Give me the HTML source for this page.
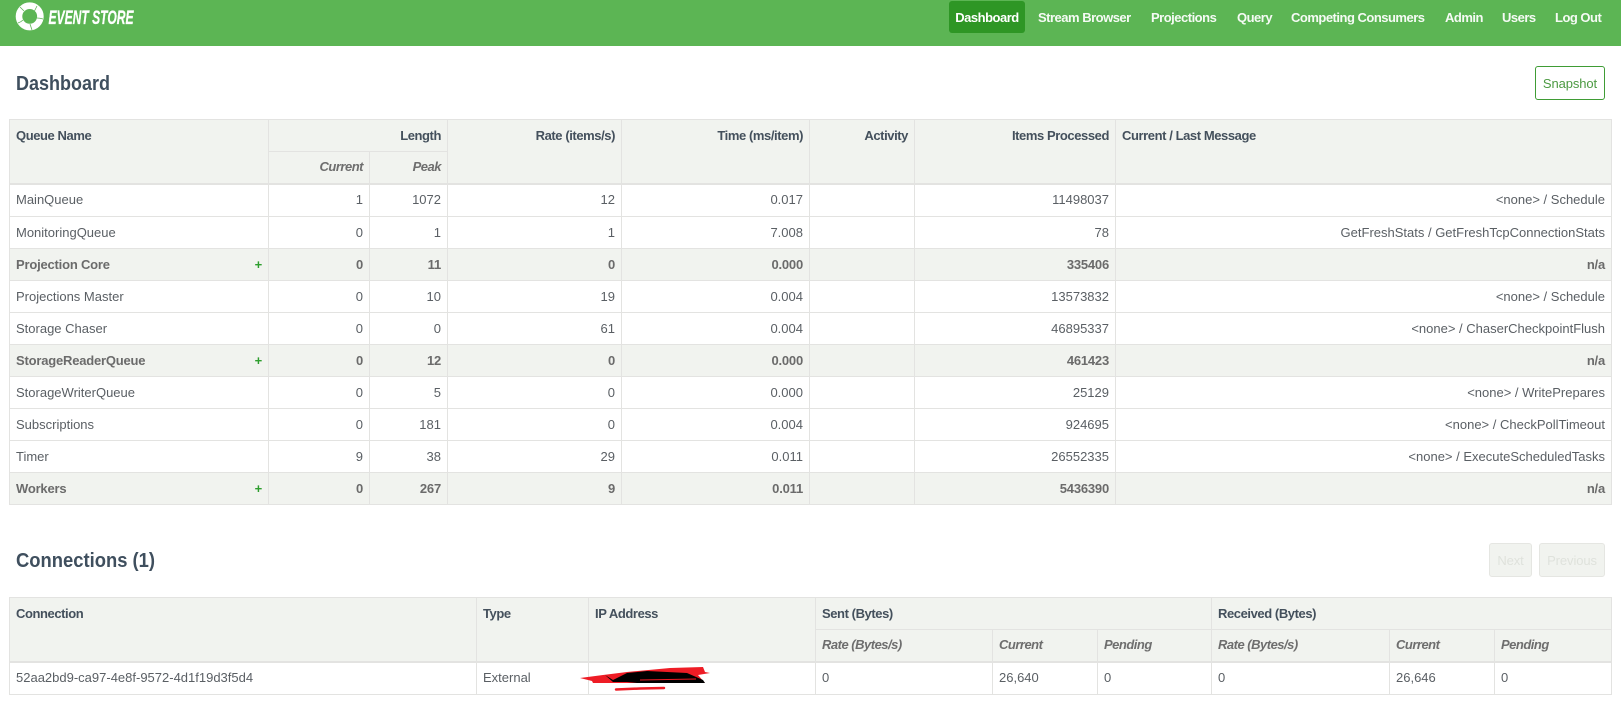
<!DOCTYPE html>
<html lang="en">
<head>
<meta charset="utf-8">
<title>Event Store Dashboard</title>
<style>
html,body{margin:0;padding:0;background:#fff;width:1621px;height:711px;overflow:hidden}
body{font-family:"Liberation Sans",Arial,sans-serif;font-size:13px;color:#5a5f64;position:relative}
.nav{position:absolute;left:0;top:0;width:1621px;height:46px;background:#5cb554}
.logo{position:absolute;left:14px;top:0}
.nav a{position:absolute;top:1px;height:32px;line-height:34px;color:#fff;font-weight:bold;font-size:13px;letter-spacing:-.5px;white-space:nowrap;text-decoration:none;opacity:.94}
.nav a.on{left:949px;width:76px;background:#2e9625;border-radius:3px;text-align:center;opacity:1}
h1{position:absolute;margin:0;left:16px;font-size:20px;line-height:24px;font-weight:bold;color:#3f4f5e;transform-origin:0 50%;white-space:nowrap}
.btn{position:absolute;box-sizing:border-box;text-align:center;border-radius:3px;font-size:13px;letter-spacing:-.1px}
.snap{left:1535px;top:66px;width:70px;height:34px;line-height:33px;border:1px solid #3f9c35;color:#4c9a42}
.dis{top:543px;height:34px;line-height:33px;background:#f1f3ef;border:1px solid #e5e6e2;color:#dfe2dc}
table{position:absolute;left:9px;border-collapse:collapse;table-layout:fixed;background:#fff}
th,td{border:1px solid #e3e3e1;padding:0 6px;height:32px;line-height:16px;font-size:13px;white-space:nowrap;overflow:hidden;box-sizing:border-box}
th{background:#f1f3ef;color:#44505c;font-weight:bold;letter-spacing:-.42px;text-align:left}
th.t{vertical-align:top;padding-top:8px}
th.s{font-style:italic;color:#6e6e6e;letter-spacing:-.5px}
tbody tr:first-child td{border-top:2px solid #e3e3e1;height:33px}
.r{text-align:right}
td{color:#5a5f64}
td.r{text-align:right}
tr.g td{background:#f1f3ef;font-weight:bold;color:#6b6b6b;letter-spacing:-.2px}
.p{float:right;color:#2e9e2e;font-weight:bold;margin-right:0}
.sc{position:absolute;left:575px;top:662px}
</style>
</head>
<body>
<div class="nav">
  <svg class="logo" width="125" height="34" viewBox="0 0 125 34">
    <circle cx="15.7" cy="16.4" r="10.700" fill="none" stroke="#fff" stroke-width="6.600"/>
    <g stroke="#5cb554" stroke-width=".8" fill="none">
      <path d="M23 6 Q21 10 20 12"/><path d="M29 19 Q26 18 23 18"/><path d="M18 30 Q17 27 16 24"/><path d="M4 23 Q7 22 9 20"/><path d="M6 7 Q8 9 10 11"/>
    </g>
    <text x="34.500" y="24" font-family="Liberation Sans" font-size="19.500" font-weight="bold" font-style="italic" fill="#fff" stroke="#fff" stroke-width=".3" textLength="85" lengthAdjust="spacingAndGlyphs">EVENT STORE</text>
  </svg>
  <a class="on">Dashboard</a>
  <a style="left:1038px">Stream Browser</a>
  <a style="left:1151px">Projections</a>
  <a style="left:1237px">Query</a>
  <a style="left:1291px">Competing Consumers</a>
  <a style="left:1445px">Admin</a>
  <a style="left:1502px">Users</a>
  <a style="left:1555px">Log Out</a>
</div>

<h1 style="top:72px;transform:scaleX(.9)">Dashboard</h1>
<div class="btn snap">Snapshot</div>

<table style="top:119px;width:1602px">
<colgroup><col style="width:259px"><col style="width:101px"><col style="width:78px"><col style="width:174px"><col style="width:188px"><col style="width:105px"><col style="width:201px"><col style="width:496px"></colgroup>
<thead>
<tr style="height:32px"><th class="t" rowspan="2">Queue Name</th><th class="r" colspan="2">Length</th><th class="t r" rowspan="2">Rate (items/s)</th><th class="t r" rowspan="2">Time (ms/item)</th><th class="t r" rowspan="2">Activity</th><th class="t r" rowspan="2">Items Processed</th><th class="t" rowspan="2">Current / Last Message</th></tr>
<tr style="height:32px"><th class="s r">Current</th><th class="s r">Peak</th></tr>
</thead>
<tbody>
<tr><td>MainQueue</td><td class="r">1</td><td class="r">1072</td><td class="r">12</td><td class="r">0.017</td><td></td><td class="r">11498037</td><td class="r">&lt;none&gt; / Schedule</td></tr>
<tr><td>MonitoringQueue</td><td class="r">0</td><td class="r">1</td><td class="r">1</td><td class="r">7.008</td><td></td><td class="r">78</td><td class="r">GetFreshStats / GetFreshTcpConnectionStats</td></tr>
<tr class="g"><td>Projection Core<span class="p">+</span></td><td class="r">0</td><td class="r">11</td><td class="r">0</td><td class="r">0.000</td><td></td><td class="r">335406</td><td class="r">n/a</td></tr>
<tr><td>Projections Master</td><td class="r">0</td><td class="r">10</td><td class="r">19</td><td class="r">0.004</td><td></td><td class="r">13573832</td><td class="r">&lt;none&gt; / Schedule</td></tr>
<tr><td>Storage Chaser</td><td class="r">0</td><td class="r">0</td><td class="r">61</td><td class="r">0.004</td><td></td><td class="r">46895337</td><td class="r">&lt;none&gt; / ChaserCheckpointFlush</td></tr>
<tr class="g"><td>StorageReaderQueue<span class="p">+</span></td><td class="r">0</td><td class="r">12</td><td class="r">0</td><td class="r">0.000</td><td></td><td class="r">461423</td><td class="r">n/a</td></tr>
<tr><td>StorageWriterQueue</td><td class="r">0</td><td class="r">5</td><td class="r">0</td><td class="r">0.000</td><td></td><td class="r">25129</td><td class="r">&lt;none&gt; / WritePrepares</td></tr>
<tr><td>Subscriptions</td><td class="r">0</td><td class="r">181</td><td class="r">0</td><td class="r">0.004</td><td></td><td class="r">924695</td><td class="r">&lt;none&gt; / CheckPollTimeout</td></tr>
<tr><td>Timer</td><td class="r">9</td><td class="r">38</td><td class="r">29</td><td class="r">0.011</td><td></td><td class="r">26552335</td><td class="r">&lt;none&gt; / ExecuteScheduledTasks</td></tr>
<tr class="g"><td>Workers<span class="p">+</span></td><td class="r">0</td><td class="r">267</td><td class="r">9</td><td class="r">0.011</td><td></td><td class="r">5436390</td><td class="r">n/a</td></tr>
</tbody>
</table>

<h1 style="top:549px;transform:scaleX(.92)">Connections (1)</h1>
<div class="btn dis" style="left:1489px;width:43px">Next</div>
<div class="btn dis" style="left:1539px;width:66px">Previous</div>

<table style="top:597px;width:1602px">
<colgroup><col style="width:467px"><col style="width:112px"><col style="width:227px"><col style="width:177px"><col style="width:105px"><col style="width:114px"><col style="width:178px"><col style="width:105px"><col style="width:117px"></colgroup>
<thead>
<tr style="height:32px"><th class="t" rowspan="2">Connection</th><th class="t" rowspan="2">Type</th><th class="t" rowspan="2">IP Address</th><th colspan="3">Sent (Bytes)</th><th colspan="3">Received (Bytes)</th></tr>
<tr style="height:32px"><th class="s">Rate (Bytes/s)</th><th class="s">Current</th><th class="s">Pending</th><th class="s">Rate (Bytes/s)</th><th class="s">Current</th><th class="s">Pending</th></tr>
</thead>
<tbody>
<tr><td>52aa2bd9-ca97-4e8f-9572-4d1f19d3f5d4</td><td>External</td><td></td><td>0</td><td>26,640</td><td>0</td><td>0</td><td>26,646</td><td>0</td></tr>
</tbody>
</table>

<svg class="sc" width="150" height="36" viewBox="575 662 150 36">
  <path d="M580 678 L603 675 L627 672 L670 668 L703 667 L705 672 L710 673 L698 675 L705 683 L593 683 L592 681 Z" fill="#ee1c25"/>
  <path d="M616 689.500 L640 688.500 L664 688" stroke="#ee1c25" stroke-width="2.500" fill="none" stroke-linecap="round"/>
  <path d="M605 675 L613 680 L627 673 L647 671 L687 673 L703 680 L705 683 L637 683 L627 682 L613 682 Z" fill="#000"/>
  <path d="M640 680 L696 679" stroke="#ee1c25" stroke-width="1"/>
</svg>
</body>
</html>
